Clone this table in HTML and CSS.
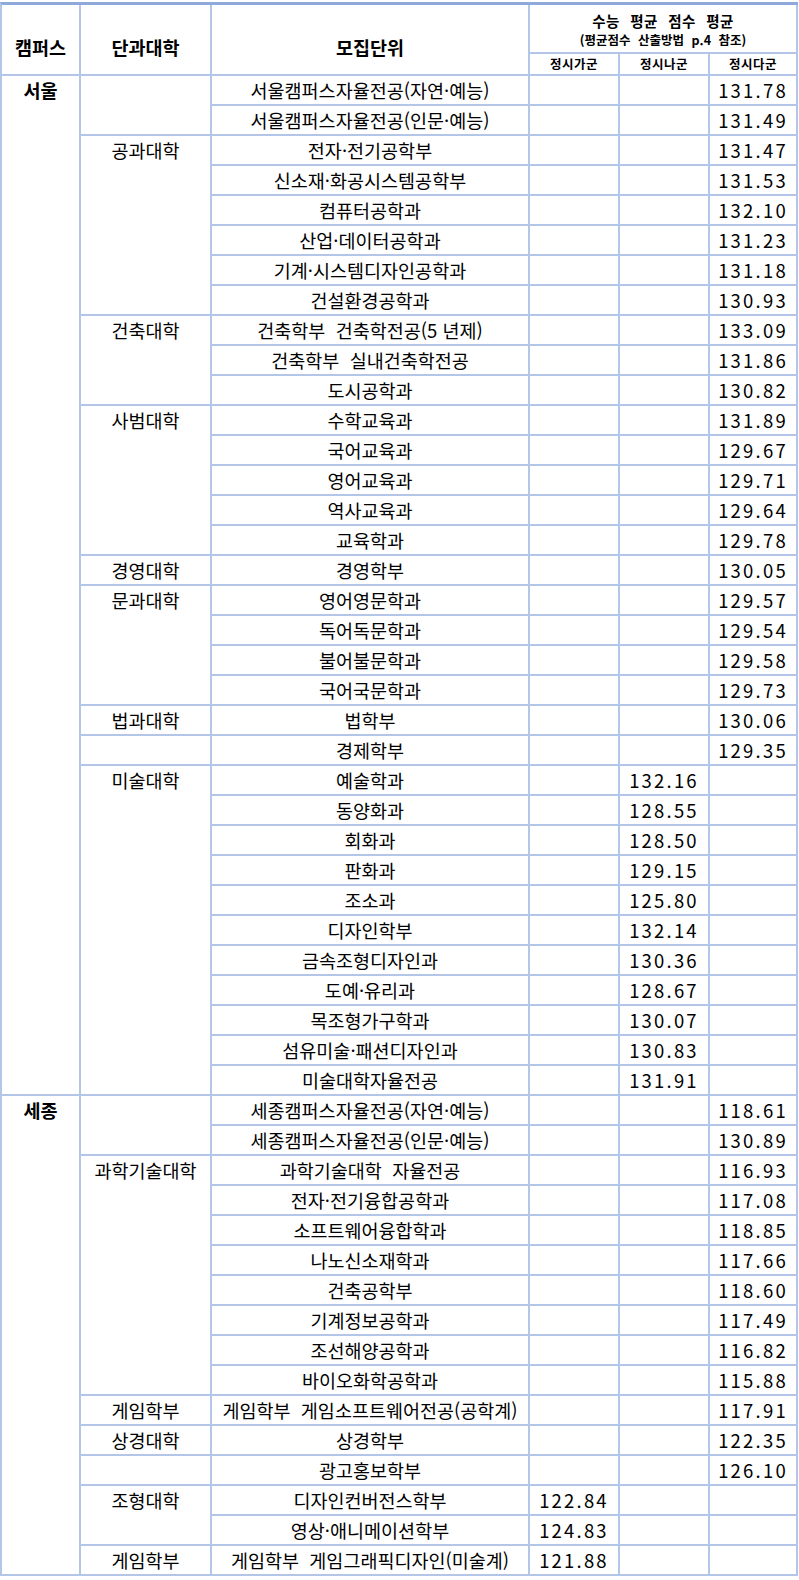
FILE: index.html
```html
<!DOCTYPE html>
<html lang="ko">
<head>
<meta charset="utf-8">
<link rel="stylesheet" href="styles.css">
</head>
<body>
<table class="tbl">
<colgroup>
<col class="w-campus"><col class="w-college"><col class="w-unit"><col class="w-score"><col class="w-score"><col class="w-last">
</colgroup>
<thead>
<tr class="h1">
<th rowspan="2" class="hmain">캠퍼스</th>
<th rowspan="2" class="hmain">단과대학</th>
<th rowspan="2" class="hmain">모집단위</th>
<th colspan="3" class="htitle"><div class="t1">수능 평균 점수 평균</div><div class="t2">(평균점수 산출방법 p.4 참조)</div></th>
</tr>
<tr class="h2">
<th class="hsub">정시가군</th><th class="hsub">정시나군</th><th class="hsub">정시다군</th>
</tr>
</thead>
<tbody>
<tr><td rowspan="34" class="campus">서울</td><td rowspan="2" class="college"></td><td class="unit">서울캠퍼스자율전공(자연·예능)</td><td class="n"></td><td class="n"></td><td class="n">131.78</td></tr>
<tr><td class="unit">서울캠퍼스자율전공(인문·예능)</td><td class="n"></td><td class="n"></td><td class="n">131.49</td></tr>
<tr><td rowspan="6" class="college">공과대학</td><td class="unit">전자·전기공학부</td><td class="n"></td><td class="n"></td><td class="n">131.47</td></tr>
<tr><td class="unit">신소재·화공시스템공학부</td><td class="n"></td><td class="n"></td><td class="n">131.53</td></tr>
<tr><td class="unit">컴퓨터공학과</td><td class="n"></td><td class="n"></td><td class="n">132.10</td></tr>
<tr><td class="unit">산업·데이터공학과</td><td class="n"></td><td class="n"></td><td class="n">131.23</td></tr>
<tr><td class="unit">기계·시스템디자인공학과</td><td class="n"></td><td class="n"></td><td class="n">131.18</td></tr>
<tr><td class="unit">건설환경공학과</td><td class="n"></td><td class="n"></td><td class="n">130.93</td></tr>
<tr><td rowspan="3" class="college">건축대학</td><td class="unit">건축학부&nbsp;&nbsp;건축학전공(5 년제)</td><td class="n"></td><td class="n"></td><td class="n">133.09</td></tr>
<tr><td class="unit">건축학부&nbsp;&nbsp;실내건축학전공</td><td class="n"></td><td class="n"></td><td class="n">131.86</td></tr>
<tr><td class="unit">도시공학과</td><td class="n"></td><td class="n"></td><td class="n">130.82</td></tr>
<tr><td rowspan="5" class="college">사범대학</td><td class="unit">수학교육과</td><td class="n"></td><td class="n"></td><td class="n">131.89</td></tr>
<tr><td class="unit">국어교육과</td><td class="n"></td><td class="n"></td><td class="n">129.67</td></tr>
<tr><td class="unit">영어교육과</td><td class="n"></td><td class="n"></td><td class="n">129.71</td></tr>
<tr><td class="unit">역사교육과</td><td class="n"></td><td class="n"></td><td class="n">129.64</td></tr>
<tr><td class="unit">교육학과</td><td class="n"></td><td class="n"></td><td class="n">129.78</td></tr>
<tr><td class="college">경영대학</td><td class="unit">경영학부</td><td class="n"></td><td class="n"></td><td class="n">130.05</td></tr>
<tr><td rowspan="4" class="college">문과대학</td><td class="unit">영어영문학과</td><td class="n"></td><td class="n"></td><td class="n">129.57</td></tr>
<tr><td class="unit">독어독문학과</td><td class="n"></td><td class="n"></td><td class="n">129.54</td></tr>
<tr><td class="unit">불어불문학과</td><td class="n"></td><td class="n"></td><td class="n">129.58</td></tr>
<tr><td class="unit">국어국문학과</td><td class="n"></td><td class="n"></td><td class="n">129.73</td></tr>
<tr><td class="college">법과대학</td><td class="unit">법학부</td><td class="n"></td><td class="n"></td><td class="n">130.06</td></tr>
<tr><td class="college"></td><td class="unit">경제학부</td><td class="n"></td><td class="n"></td><td class="n">129.35</td></tr>
<tr><td rowspan="11" class="college">미술대학</td><td class="unit">예술학과</td><td class="n"></td><td class="n">132.16</td><td class="n"></td></tr>
<tr><td class="unit">동양화과</td><td class="n"></td><td class="n">128.55</td><td class="n"></td></tr>
<tr><td class="unit">회화과</td><td class="n"></td><td class="n">128.50</td><td class="n"></td></tr>
<tr><td class="unit">판화과</td><td class="n"></td><td class="n">129.15</td><td class="n"></td></tr>
<tr><td class="unit">조소과</td><td class="n"></td><td class="n">125.80</td><td class="n"></td></tr>
<tr><td class="unit">디자인학부</td><td class="n"></td><td class="n">132.14</td><td class="n"></td></tr>
<tr><td class="unit">금속조형디자인과</td><td class="n"></td><td class="n">130.36</td><td class="n"></td></tr>
<tr><td class="unit">도예·유리과</td><td class="n"></td><td class="n">128.67</td><td class="n"></td></tr>
<tr><td class="unit">목조형가구학과</td><td class="n"></td><td class="n">130.07</td><td class="n"></td></tr>
<tr><td class="unit">섬유미술·패션디자인과</td><td class="n"></td><td class="n">130.83</td><td class="n"></td></tr>
<tr><td class="unit">미술대학자율전공</td><td class="n"></td><td class="n">131.91</td><td class="n"></td></tr>
<tr><td rowspan="16" class="campus">세종</td><td rowspan="2" class="college"></td><td class="unit">세종캠퍼스자율전공(자연·예능)</td><td class="n"></td><td class="n"></td><td class="n">118.61</td></tr>
<tr><td class="unit">세종캠퍼스자율전공(인문·예능)</td><td class="n"></td><td class="n"></td><td class="n">130.89</td></tr>
<tr><td rowspan="8" class="college">과학기술대학</td><td class="unit">과학기술대학&nbsp;&nbsp;자율전공</td><td class="n"></td><td class="n"></td><td class="n">116.93</td></tr>
<tr><td class="unit">전자·전기융합공학과</td><td class="n"></td><td class="n"></td><td class="n">117.08</td></tr>
<tr><td class="unit">소프트웨어융합학과</td><td class="n"></td><td class="n"></td><td class="n">118.85</td></tr>
<tr><td class="unit">나노신소재학과</td><td class="n"></td><td class="n"></td><td class="n">117.66</td></tr>
<tr><td class="unit">건축공학부</td><td class="n"></td><td class="n"></td><td class="n">118.60</td></tr>
<tr><td class="unit">기계정보공학과</td><td class="n"></td><td class="n"></td><td class="n">117.49</td></tr>
<tr><td class="unit">조선해양공학과</td><td class="n"></td><td class="n"></td><td class="n">116.82</td></tr>
<tr><td class="unit">바이오화학공학과</td><td class="n"></td><td class="n"></td><td class="n">115.88</td></tr>
<tr><td class="college">게임학부</td><td class="unit">게임학부&nbsp;&nbsp;게임소프트웨어전공(공학계)</td><td class="n"></td><td class="n"></td><td class="n">117.91</td></tr>
<tr><td class="college">상경대학</td><td class="unit">상경학부</td><td class="n"></td><td class="n"></td><td class="n">122.35</td></tr>
<tr><td class="college"></td><td class="unit">광고홍보학부</td><td class="n"></td><td class="n"></td><td class="n">126.10</td></tr>
<tr><td rowspan="2" class="college">조형대학</td><td class="unit">디자인컨버전스학부</td><td class="n">122.84</td><td class="n"></td><td class="n"></td></tr>
<tr><td class="unit">영상·애니메이션학부</td><td class="n">124.83</td><td class="n"></td><td class="n"></td></tr>
<tr><td class="college">게임학부</td><td class="unit">게임학부&nbsp;&nbsp;게임그래픽디자인(미술계)</td><td class="n">121.88</td><td class="n"></td><td class="n"></td></tr>
</tbody>
</table>
</body>
</html>
```
FILE: styles.css
```css
html, body {
  margin: 0;
  padding: 0;
  background: #fff;
}
body {
  padding-top: 2px;
  font-family: "Noto Sans CJK KR", "Noto Sans", sans-serif;
  color: #000;
}
.tbl {
  border-collapse: separate;
  border-spacing: 0;
  table-layout: fixed;
  width: 798px;
  border-top: 3px solid #8eaadb;
  border-left: 2px solid #b4c6e7;
}
.w-campus { width: 79px; }
.w-college { width: 131px; }
.w-unit { width: 318px; }
.w-score { width: 90px; }
.w-last { width: 88px; }
.tbl th, .tbl td {
  border-right: 2px solid #b4c6e7;
  border-bottom: 2px solid #b4c6e7;
  padding: 0;
  text-align: center;
  white-space: nowrap;
  box-sizing: border-box;
}
.tbl .h1 { height: 49px; }
.tbl .h2 { height: 22px; }
.tbl tbody tr { height: 30px; }
.tbl .hmain {
  font-size: 18.5px;
  font-weight: 700;
  vertical-align: top;
  padding-top: 30px;
  line-height: 24px;
}
.tbl .htitle {
  vertical-align: top;
  font-weight: 700;
}
.t1 {
  font-size: 14.5px;
  line-height: 20px;
  padding-top: 6px;
  letter-spacing: 0.4px;
  word-spacing: 6px;
}
.t2 {
  font-size: 12.5px;
  line-height: 18px;
  word-spacing: 4px;
}
.tbl .hsub {
  font-size: 12.5px;
  font-weight: 700;
  line-height: 20px;
  letter-spacing: 0.5px;
  vertical-align: middle;
}
.tbl .campus {
  font-size: 18.5px;
  font-weight: 700;
  vertical-align: top;
  line-height: 28px;
}
.tbl .college {
  font-size: 18.5px;
  vertical-align: top;
  line-height: 28px;
}
.tbl .unit {
  font-size: 18.5px;
  line-height: 28px;
  vertical-align: middle;
}
.tbl .n {
  font-size: 18.5px;
  line-height: 28px;
  vertical-align: middle;
  letter-spacing: 2.2px;
}
```
